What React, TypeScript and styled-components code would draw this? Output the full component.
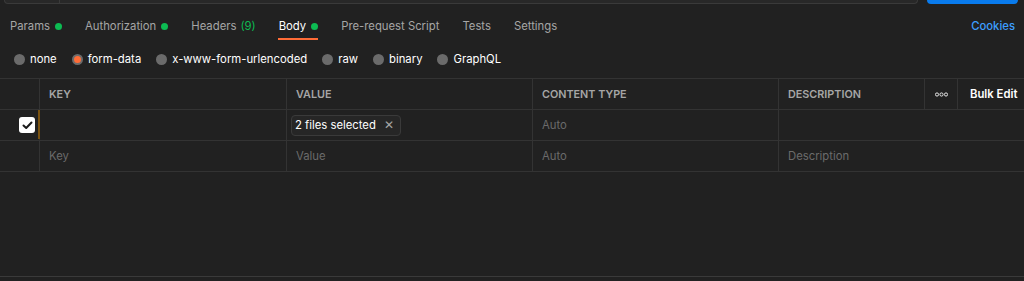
import styled, { createGlobalStyle } from "styled-components";

const GlobalStyle = createGlobalStyle`
  html, body {
    margin: 0;
    padding: 0;
    background: #212121;
    font-family: Inter, "Noto Sans", sans-serif;
    font-size: 11.3px;
    color: #ffffff;
    -webkit-font-smoothing: antialiased;
  }
`;

const Page = styled.div`
  width: 1024px;
  height: 281px;
  background: #212121;
  display: flex;
  flex-direction: column;
  overflow: hidden;
`;

const UrlBar = styled.div`
  display: flex;
  gap: 9px;
  padding: 0 6px 0 4px;
  height: 4px;
`;

const UrlInput = styled.div`
  flex: 1;
  height: 3px;
  border: 1px solid #3a3a3a;
  border-top: none;
  border-radius: 0 0 4px 4px;
  background: #282828;
  display: flex;
`;

const MethodPart = styled.div`
  width: 54px;
  border-right: 1px solid #3a3a3a;
`;

const SendButton = styled.div`
  width: 91px;
  height: 4px;
  background: #097bed;
  border-radius: 0 0 4px 4px;
`;

const TabRow = styled.div`
  display: flex;
  align-items: stretch;
  height: 36px;
  padding: 0 9px 0 10px;
  box-sizing: border-box;
`;

const Tab = styled.div<{ $active?: boolean }>`
  position: relative;
  display: flex;
  align-items: center;
  gap: 5px;
  padding-top: 8px;
  margin-right: 23px;
  color: ${(p) => (p.$active ? "#ffffff" : "#a6a6a6")};
  &::after {
    content: "";
    display: ${(p) => (p.$active ? "block" : "none")};
    position: absolute;
    left: -1px;
    right: 0;
    bottom: 0;
    height: 2px;
    background: #ff6c37;
  }
`;

const Dot = styled.span`
  width: 7px;
  height: 7px;
  border-radius: 50%;
  background: #0cbb52;
`;

const Count = styled.span`
  color: #0cbb52;
  margin-left: -1px;
`;

const Cookies = styled.div`
  margin-left: auto;
  padding-top: 8px;
  display: flex;
  align-items: center;
  color: #3d9eff;
  font-weight: 500;
`;

const RadioRow = styled.div`
  display: flex;
  align-items: center;
  height: 38px;
  padding-left: 14px;
  gap: 15px;
`;

const RadioItem = styled.label`
  display: flex;
  align-items: center;
  gap: 5px;
  color: #ffffff;
`;

const RadioCircle = styled.span<{ $checked?: boolean }>`
  width: 11px;
  height: 11px;
  border-radius: 50%;
  background: ${(p) => (p.$checked ? "#ff6c37" : "#6b6b6b")};
  box-sizing: border-box;
  border: ${(p) => (p.$checked ? "2px solid #6b6b6b" : "none")};
`;

const Table = styled.div`
  border-top: 1px solid #333333;
  display: flex;
  flex-direction: column;
`;

const HeaderRow = styled.div`
  display: grid;
  grid-template-columns: 40px 247px 246px 246px 146px 33px 1fr;
  height: 30px;
  border-bottom: 1px solid #333333;
`;

const BodyRow = styled.div`
  display: grid;
  grid-template-columns: 40px 247px 246px 246px 1fr;
  height: 30px;
  border-bottom: 1px solid #333333;
`;

const Cell = styled.div<{ $last?: boolean }>`
  display: flex;
  align-items: center;
  padding: 0 9px;
  border-right: ${(p) => (p.$last ? "none" : "1px solid #333333")};
  min-width: 0;
  white-space: nowrap;
  box-sizing: border-box;
`;

const HeadCell = styled(Cell)`
  font-size: 10.8px;
  font-weight: 600;
  color: #a6a6a6;
`;

const CheckCell = styled.div<{ $focus?: boolean }>`
  display: flex;
  align-items: center;
  justify-content: flex-end;
  padding-right: 4px;
  border-right: 1px solid #333333;
  position: relative;
  &::after {
    content: "";
    display: ${(p) => (p.$focus ? "block" : "none")};
    position: absolute;
    right: -1px;
    top: 0;
    bottom: 1px;
    width: 2px;
    background: #7a5210;
  }
`;

const Checkbox = styled.span`
  width: 16px;
  height: 16px;
  border-radius: 3px;
  background: #ffffff;
  display: flex;
  align-items: center;
  justify-content: center;
`;

const Placeholder = styled.span`
  color: #6b6b6b;
`;

const FileChip = styled.div`
  display: flex;
  align-items: center;
  gap: 8px;
  height: 19px;
  padding: 0 6px 0 3px;
  margin-left: -5px;
  border: 1px solid #3a3a3a;
  border-radius: 4px;
  background: #262626;
  color: #ffffff;
`;

const CloseX = styled.span`
  color: #a6a6a6;
  font-size: 12px;
  line-height: 1;
`;

const MoreCell = styled(Cell)`
  justify-content: center;
  padding: 0;
`;

const BulkEdit = styled(Cell)`
  font-weight: 600;
  color: #ffffff;
  padding: 0 0 0 12px;
`;

const Spacer = styled.div`
  flex: 1;
  border-bottom: 1px solid #3a3a3a;
  margin-bottom: 4px;
`;

const tabs = [
  { label: "Params", dot: true },
  { label: "Authorization", dot: true },
  { label: "Headers", count: "(9)" },
  { label: "Body", dot: true, active: true },
  { label: "Pre-request Script" },
  { label: "Tests" },
  { label: "Settings" },
];

const modes = ["none", "form-data", "x-www-form-urlencoded", "raw", "binary", "GraphQL"];

export default function App() {
  return (
    <>
      <GlobalStyle />
      <Page>
        <UrlBar>
          <UrlInput>
            <MethodPart />
          </UrlInput>
          <SendButton />
        </UrlBar>
        <TabRow>
          {tabs.map((t) => (
            <Tab key={t.label} $active={t.active}>
              {t.label}
              {t.count && <Count>{t.count}</Count>}
              {t.dot && <Dot />}
            </Tab>
          ))}
          <Cookies>Cookies</Cookies>
        </TabRow>
        <RadioRow>
          {modes.map((m) => (
            <RadioItem key={m}>
              <RadioCircle $checked={m === "form-data"} />
              {m}
            </RadioItem>
          ))}
        </RadioRow>
        <Table>
          <HeaderRow>
            <CheckCell />
            <HeadCell>KEY</HeadCell>
            <HeadCell>VALUE</HeadCell>
            <HeadCell>CONTENT TYPE</HeadCell>
            <HeadCell>DESCRIPTION</HeadCell>
            <MoreCell>
              <svg width="13" height="5" viewBox="0 0 13 5">
                <circle cx="2" cy="2.5" r="1.6" fill="none" stroke="#e6e6e6" strokeWidth="1" />
                <circle cx="6.5" cy="2.5" r="1.6" fill="none" stroke="#e6e6e6" strokeWidth="1" />
                <circle cx="11" cy="2.5" r="1.6" fill="none" stroke="#e6e6e6" strokeWidth="1" />
              </svg>
            </MoreCell>
            <BulkEdit $last>Bulk Edit</BulkEdit>
          </HeaderRow>
          <BodyRow>
            <CheckCell $focus>
              <Checkbox>
                <svg width="11" height="9" viewBox="0 0 11 9">
                  <path d="M1.5 4.5 L4.2 7 L9.5 1.5" fill="none" stroke="#1a1a1a" strokeWidth="2" strokeLinecap="round" strokeLinejoin="round" />
                </svg>
              </Checkbox>
            </CheckCell>
            <Cell />
            <Cell>
              <FileChip>
                2 files selected
                <CloseX>✕</CloseX>
              </FileChip>
            </Cell>
            <Cell>
              <Placeholder>Auto</Placeholder>
            </Cell>
            <Cell $last />
          </BodyRow>
          <BodyRow>
            <CheckCell />
            <Cell>
              <Placeholder>Key</Placeholder>
            </Cell>
            <Cell>
              <Placeholder>Value</Placeholder>
            </Cell>
            <Cell>
              <Placeholder>Auto</Placeholder>
            </Cell>
            <Cell $last>
              <Placeholder>Description</Placeholder>
            </Cell>
          </BodyRow>
        </Table>
        <Spacer />
      </Page>
    </>
  );
}
